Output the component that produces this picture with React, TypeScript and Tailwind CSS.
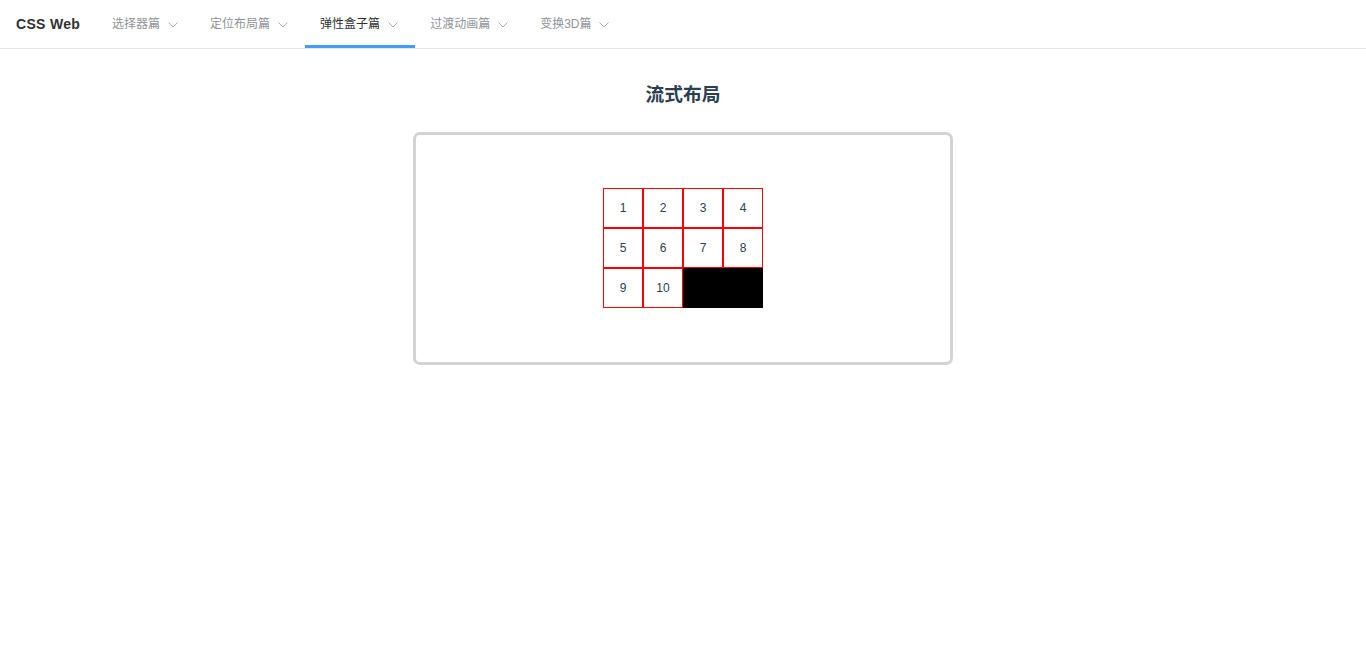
import React from 'react';

const MENUS = ['选择器篇', '定位布局篇', '弹性盒子篇', '过渡动画篇', '变换3D篇'];
const ACTIVE = '弹性盒子篇';

function Chevron() {
  return (
    <svg width="10" height="6" viewBox="0 0 10 6" className="ml-2 mt-[2px]" fill="none">
      <path d="M0.5 0.5 L5 5 L9.5 0.5" stroke="#a8abb2" strokeWidth="1" />
    </svg>
  );
}

export default function App() {
  const items = Array.from({ length: 10 }, (_, i) => i + 1);

  return (
    <div className="min-h-[657px] bg-white" style={{ fontFamily: '"Liberation Sans", Arial, "Noto Sans CJK SC", sans-serif' }}>
      {/* Header */}
      <div className="flex h-[49px] items-stretch border-b border-[#e6e6e6]">
        <div className="flex items-center pl-4 pr-[17px] text-[14px] font-bold tracking-[0.3px] text-[#303133]">CSS Web</div>
        {MENUS.map((m) => (
          <div
            key={m}
            className={
              m === ACTIVE
                ? 'flex items-center border-b-[3px] border-[#409eff] pl-[15px] pr-[17px] pt-[3px] text-[12px] text-[#303133]'
                : 'flex items-center border-b-[3px] border-transparent pl-[15px] pr-[17px] pt-[3px] text-[12px] text-[#909399]'
            }
          >
            <span>{m}</span>
            <Chevron />
          </div>
        ))}
      </div>

      {/* Content */}
      <div className="flex flex-col items-center">
        <h3 className="mt-[34px] text-[18.72px] font-bold leading-[24px] text-[#2c3e50]">流式布局</h3>
        <div className="mt-[25px] flex h-[233px] w-[540px] justify-center rounded-[7px] border-[3px] border-[#d3d3d3] pt-[53px]">
          <div className="flex h-[120px] w-[160px] flex-wrap content-start bg-black">
            {items.map((n) => (
              <div
                key={n}
                className="flex h-[40px] w-[40px] items-center justify-center border border-[#ff0000] bg-white text-[12px] text-[#2c3e50]"
              >
                {n}
              </div>
            ))}
          </div>
        </div>
      </div>
    </div>
  );
}
